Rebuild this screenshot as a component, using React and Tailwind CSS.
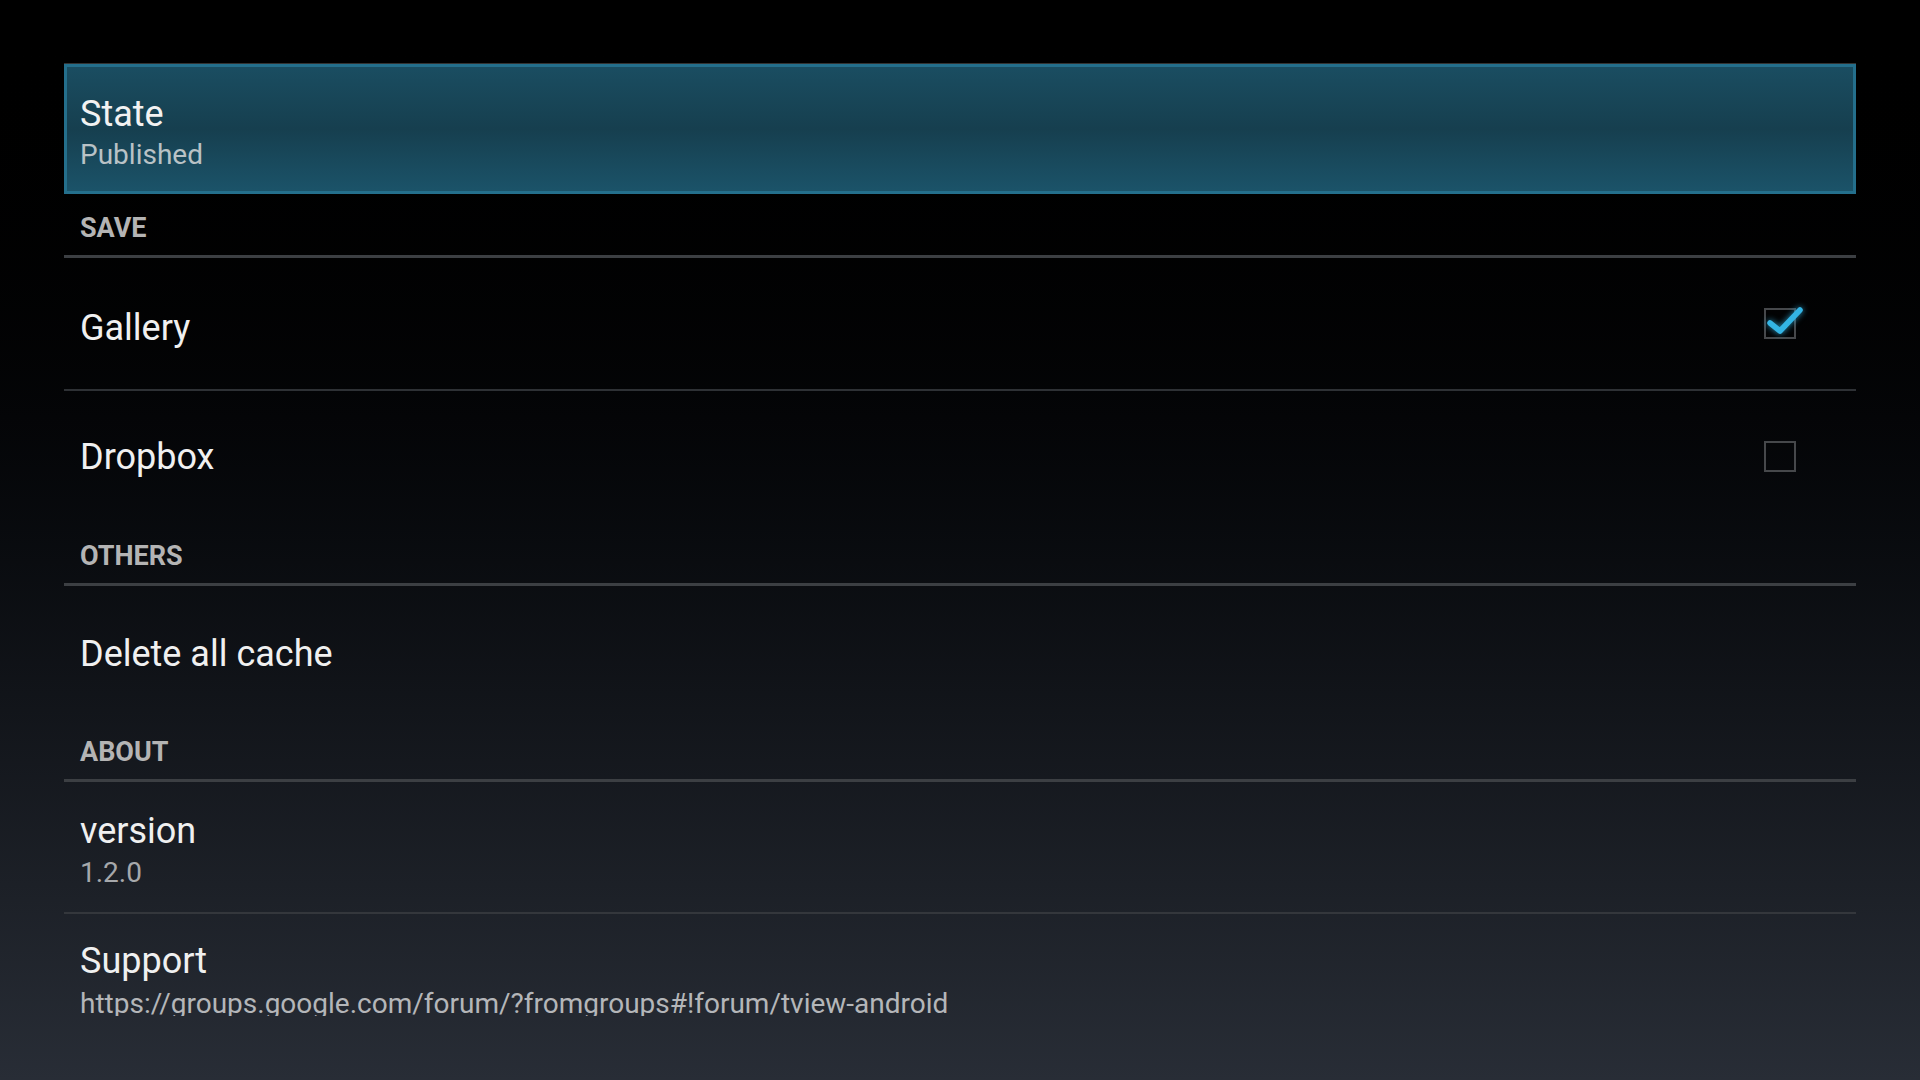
import React from "react";

function Checkbox({ checked }) {
  return (
    <div className="relative mr-[60px] h-[31px] w-[32px] border-2 border-[#46484b]">
      {checked && (
        <svg
          className="absolute left-[-6px] top-[-17px] overflow-visible"
          width="46"
          height="44"
          viewBox="0 0 46 44"
        >
          <polyline
            points="10,30 20,38 40,17"
            fill="none"
            stroke="#33b5e5"
            strokeWidth="5.5"
            strokeLinecap="round"
            strokeLinejoin="round"
            style={{ filter: "drop-shadow(0 0 3px rgba(51,181,229,0.8))" }}
          />
        </svg>
      )}
    </div>
  );
}

function Header({ label }) {
  return (
    <div className="pt-[18px]">
      <div className="pb-[11px] pl-[16px] text-[27px] font-bold leading-[32px] text-[#b4b4b4]">
        {label}
      </div>
      <div className="h-[3px] bg-[#3c3f43]" />
    </div>
  );
}

function CheckRow({ label, checked, offset }) {
  return (
    <div className="flex h-[131px] items-center justify-between pl-[16px]">
      <div className={`${offset} text-[36px] leading-[44px] text-[#f0f0f0]`}>{label}</div>
      <Checkbox checked={checked} />
    </div>
  );
}

export default function App() {
  return (
    <div className="h-[1080px] w-full overflow-hidden bg-linear-to-b from-black to-[#282d36] font-[Roboto,sans-serif]">
      <div className="px-[64px] pt-[64px]">
        <div className="flex h-[130px] flex-col justify-center border-[3px] border-[#246f8c] bg-linear-to-b from-[#1a4d61] via-[#163f4f] to-[#1b5369] pl-[13px] shadow-[0_-1px_0_#333]">
          <div className="mt-[6px] text-[36px] leading-[44px] text-[#f2f2f2]">State</div>
          <div className="mt-[1px] text-[28px] leading-[36px] text-[#b9c2c6]">Published</div>
        </div>

        <Header label="SAVE" />
        <CheckRow label="Gallery" checked offset="mt-[8px]" />
        <div className="h-[2px] bg-[#2e3135]" />
        <CheckRow label="Dropbox" checked={false} offset="mt-[1px]" />

        <Header label="OTHERS" />
        <div className="flex h-[132px] items-center pl-[16px]">
          <div className="mt-[4px] text-[36px] leading-[44px] text-[#f0f0f0]">Delete all cache</div>
        </div>

        <Header label="ABOUT" />
        <div className="flex h-[130px] flex-col justify-center pl-[16px]">
          <div className="mt-[6px] text-[36px] leading-[44px] text-[#f0f0f0]">version</div>
          <div className="mt-[2px] text-[28px] leading-[36px] text-[#a6a8ab]">1.2.0</div>
        </div>
        <div className="h-[2px] bg-[#34373c]" />
        <div className="pl-[16px] pt-[25px]">
          <div className="text-[36px] leading-[44px] text-[#f0f0f0]">Support</div>
          <div className="mt-[3px] h-[30px] overflow-hidden text-[28px] leading-[36px] text-[#b4b6b9]">
            https://groups.google.com/forum/?fromgroups#!forum/tview-android
          </div>
        </div>
      </div>
    </div>
  );
}
